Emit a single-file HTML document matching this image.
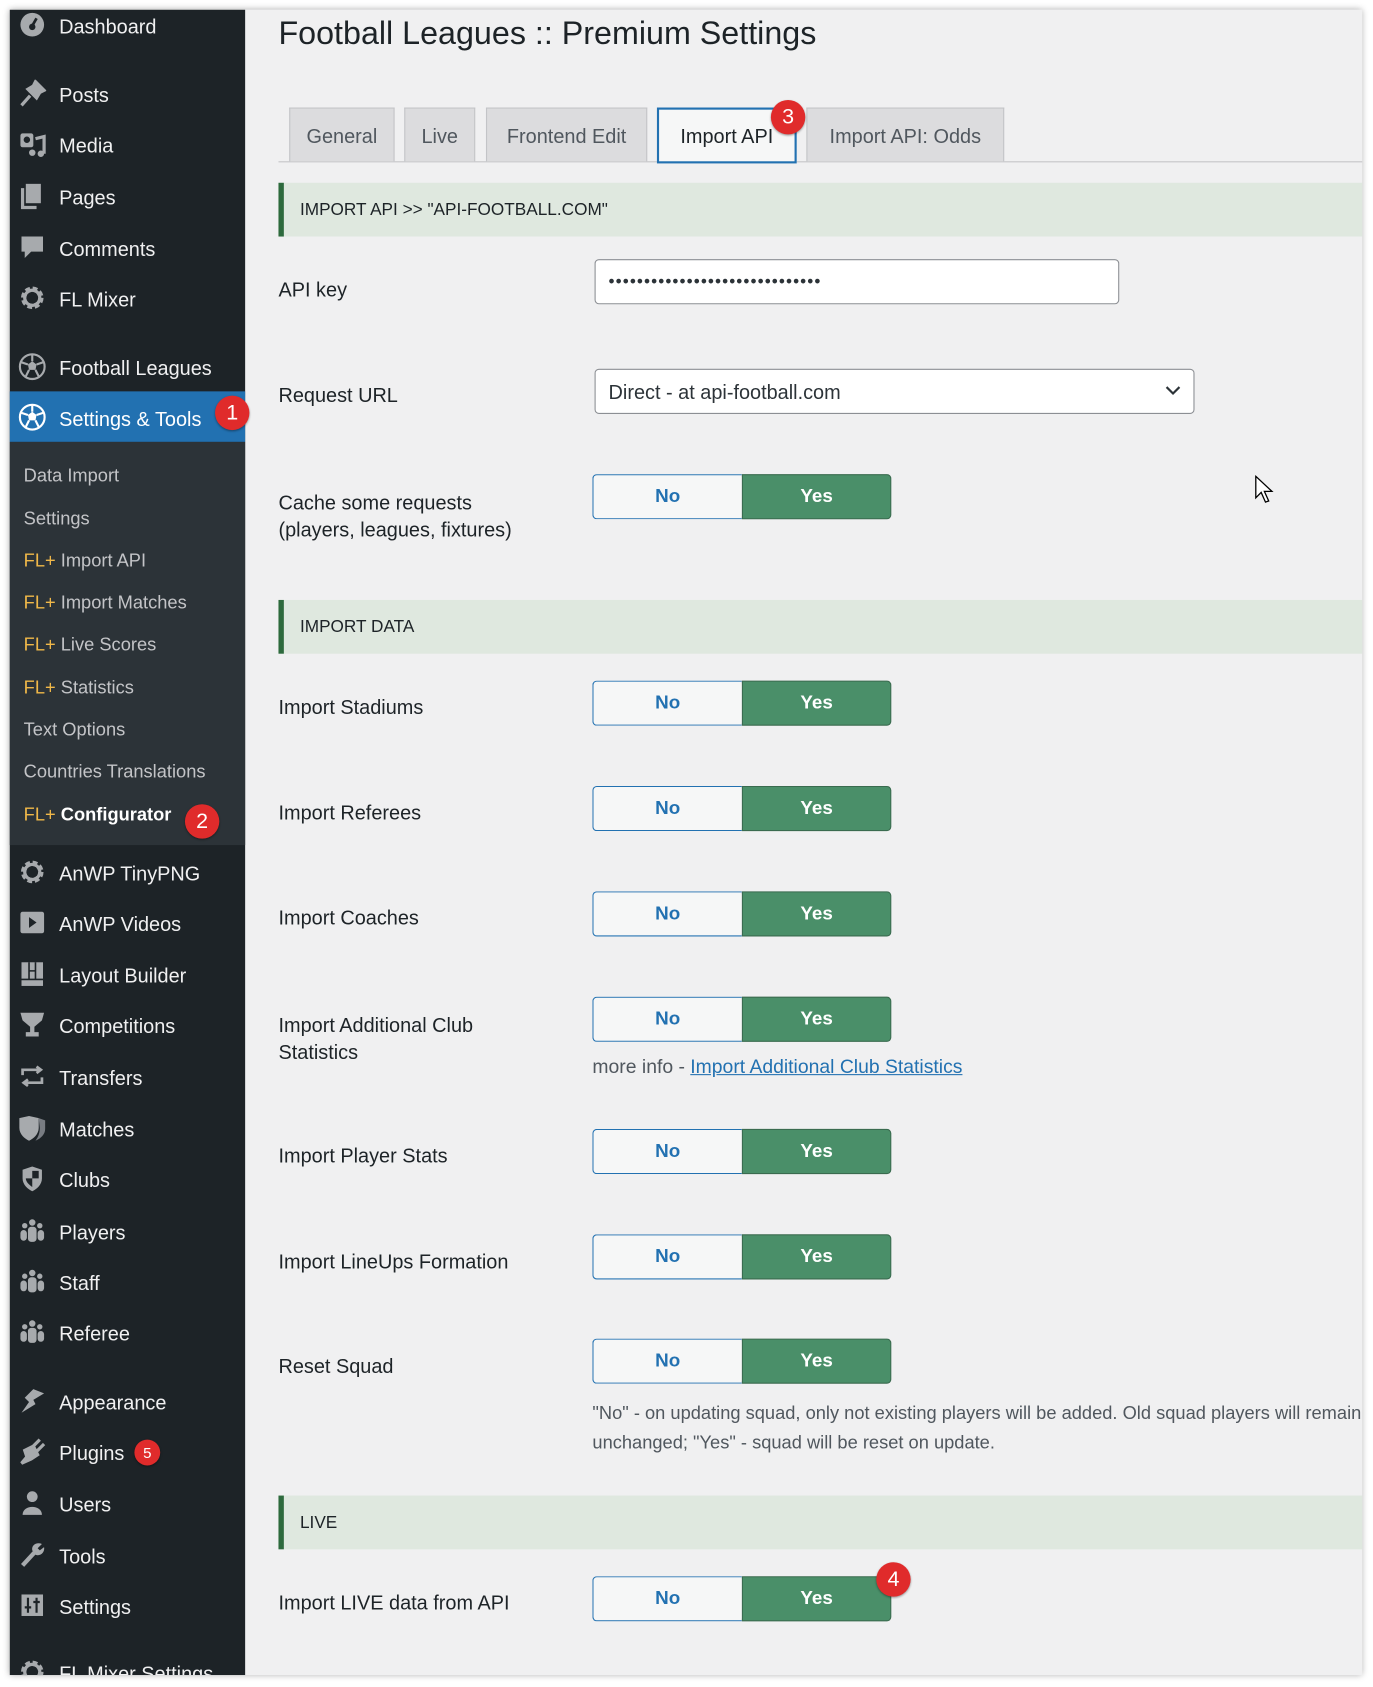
<!DOCTYPE html>
<html><head><meta charset="utf-8"><style>
*{margin:0;padding:0;box-sizing:border-box}
body{width:1373px;height:1687px;background:#fff;overflow:hidden;font-family:"Liberation Sans",sans-serif}
#w{position:absolute;left:0;top:0;width:1277px;height:1569px;transform:scale(1.07517);transform-origin:0 0}
#frame{position:absolute;left:9px;top:9px;width:1258px;height:1549px;background:#f0f0f1;overflow:hidden;box-shadow:0 0 6px rgba(0,0,0,.35)}
#side{position:absolute;left:0;top:0;width:219px;height:1549px;background:#1d2327}
.a{position:absolute;white-space:nowrap}
.m{color:#f0f0f1;font-size:18.5px;left:46px;margin-top:2px}
.ic{position:absolute;left:8px;width:26px;height:26px}
.s{color:#c3c4c7;font-size:17px;left:13px;margin-top:2px}
.fl{color:#f0b849}
.badge{position:absolute;width:32px;height:32px;border-radius:50%;background:#e02b2b;color:#fff;font-size:20px;text-align:center;line-height:32px;box-shadow:0 1px 2px rgba(0,0,0,.4)}
.lbl{color:#1d2327;font-size:18.5px;left:250px;margin-top:2px}
.tab{position:absolute;top:91px;height:50px;background:#dcdcde;border:1px solid #c3c4c7;border-bottom:none;color:#50575e;font-size:18.5px;line-height:52px;text-align:center}
.hd{position:absolute;left:250px;width:1010px;height:50px;background:#dfe8df;border-left:5px solid #2d6a3d;color:#1d2327;font-size:16px;line-height:52px;padding-left:15px}
.tg{position:absolute;left:542px;width:278px;height:42px}
.tg .n{position:absolute;left:0;top:0;width:139px;height:42px;background:#f6f7f7;border:1.5px solid #2271b1;border-right:none;border-radius:4px 0 0 4px;color:#2271b1;font-size:17.5px;text-align:center;line-height:39px;font-weight:bold}
.tg .y{position:absolute;left:139px;top:0;width:139px;height:42px;background:#4a8f69;border:1.5px solid #3a6b4f;border-radius:0 4px 4px 0;color:#fff;font-size:17.5px;text-align:center;line-height:39px;font-weight:bold}
.note{color:#50575e;font-size:17px;left:542px}
svg{display:block}
</style></head><body><div id="w"><div id="frame">
<div id="side">
<div class="a" style="left:0;top:355px;width:219px;height:47px;background:#2271b1"></div>
<div class="a" style="left:0;top:402px;width:219px;height:375px;background:#2c3338"></div>
<svg class="ic" style="top:1px" viewBox="0 0 26 26"><circle cx="13" cy="13" r="11" fill="#a7aaad"/><path d="M13 14 L17 7" stroke="#1d2327" stroke-width="2.5"/><circle cx="13" cy="15" r="3" fill="#1d2327"/></svg>
<div class="a m" style="top:3px">Dashboard</div>
<svg class="ic" style="top:65px" viewBox="0 0 26 26"><path d="M3 24 L11 15 M9 9 L17 17 L20 12 L24 10 L16 2 L14 6 Z" fill="#a7aaad" stroke="#a7aaad" stroke-width="3"/></svg>
<div class="a m" style="top:67px">Posts</div>
<svg class="ic" style="top:112px" viewBox="0 0 26 26"><rect x="2" y="3" width="12" height="13" rx="2" fill="#a7aaad"/><circle cx="8" cy="9" r="3" fill="#1d2327"/><path d="M16 8 L24 6 L24 22" stroke="#a7aaad" stroke-width="3" fill="none"/><circle cx="13" cy="21" r="3" fill="#a7aaad"/><circle cx="21" cy="22" r="3" fill="#a7aaad"/></svg>
<div class="a m" style="top:114px">Media</div>
<svg class="ic" style="top:160px" viewBox="0 0 26 26"><rect x="7" y="2" width="14" height="18" fill="#a7aaad"/><path d="M4 6 V24 H17" stroke="#a7aaad" stroke-width="3" fill="none"/></svg>
<div class="a m" style="top:162px">Pages</div>
<svg class="ic" style="top:208px" viewBox="0 0 26 26"><path d="M3 3 H23 V17 H12 L6 23 V17 H3 Z" fill="#a7aaad"/></svg>
<div class="a m" style="top:210px">Comments</div>
<svg class="ic" style="top:255px" viewBox="0 0 26 26"><circle cx="13" cy="13" r="8" fill="none" stroke="#a7aaad" stroke-width="5" stroke-dasharray="4 2.3"/><circle cx="13" cy="13" r="7" fill="none" stroke="#a7aaad" stroke-width="3"/></svg>
<div class="a m" style="top:257px">FL Mixer</div>
<svg class="ic" style="top:319px" viewBox="0 0 26 26"><circle cx="13" cy="13" r="11.5" fill="none" stroke="#a7aaad" stroke-width="2"/><path d="M13 8 L17 11 L16 16 L10 16 L9 11 Z" fill="#a7aaad"/><path d="M13 2 V8 M17 11 L23 9 M16 16 L19 22 M10 16 L7 22 M9 11 L3 9" stroke="#a7aaad" stroke-width="2"/></svg>
<div class="a m" style="top:321px">Football Leagues</div>
<svg class="ic" style="top:366px" viewBox="0 0 26 26"><circle cx="13" cy="13" r="11.5" fill="none" stroke="#fff" stroke-width="2"/><path d="M13 8 L17 11 L16 16 L10 16 L9 11 Z" fill="#fff"/><path d="M13 2 V8 M17 11 L23 9 M16 16 L19 22 M10 16 L7 22 M9 11 L3 9" stroke="#fff" stroke-width="2"/></svg>
<div class="a m" style="top:368px;color:#fff">Settings &amp; Tools</div>
<div class="badge" style="left:191px;top:359px">1</div>
<div class="a s" style="top:422px">Data Import</div>
<div class="a s" style="top:462px">Settings</div>
<div class="a s" style="top:501px"><span class="fl">FL+</span> Import API</div>
<div class="a s" style="top:540px"><span class="fl">FL+</span> Import Matches</div>
<div class="a s" style="top:579px"><span class="fl">FL+</span> Live Scores</div>
<div class="a s" style="top:619px"><span class="fl">FL+</span> Statistics</div>
<div class="a s" style="top:658px">Text Options</div>
<div class="a s" style="top:697px">Countries Translations</div>
<div class="a s" style="top:737px;color:#fff;font-weight:bold"><span class="fl" style="font-weight:normal">FL+</span> Configurator</div>
<div class="badge" style="left:163px;top:739px">2</div>
<svg class="ic" style="top:789px" viewBox="0 0 26 26"><circle cx="13" cy="13" r="8" fill="none" stroke="#a7aaad" stroke-width="5" stroke-dasharray="4 2.3"/><circle cx="13" cy="13" r="7" fill="none" stroke="#a7aaad" stroke-width="3"/></svg>
<div class="a m" style="top:791px">AnWP TinyPNG</div>
<svg class="ic" style="top:836px" viewBox="0 0 26 26"><rect x="2" y="3" width="22" height="20" rx="2" fill="#a7aaad"/><path d="M10 8 L17 13 L10 18 Z" fill="#1d2327"/></svg>
<div class="a m" style="top:838px">AnWP Videos</div>
<svg class="ic" style="top:884px" viewBox="0 0 26 26"><rect x="3" y="2" width="20" height="22" fill="#a7aaad"/><path d="M10 2 V18 M16 2 V18 M3 18 H23 M10 10 H16" stroke="#1d2327" stroke-width="1.5"/></svg>
<div class="a m" style="top:886px">Layout Builder</div>
<svg class="ic" style="top:931px" viewBox="0 0 26 26"><path d="M2 2 H24 L22 9 L15 15 V20 H19 V24 H7 V20 H11 V15 L4 9 Z" fill="#a7aaad"/></svg>
<div class="a m" style="top:933px">Competitions</div>
<svg class="ic" style="top:979px" viewBox="0 0 26 26"><path d="M4 12 V7 H20 M17 4 L21 7 L17 10 M22 14 V19 H6 M9 16 L5 19 L9 22" stroke="#a7aaad" stroke-width="2.5" fill="none"/></svg>
<div class="a m" style="top:981px">Transfers</div>
<svg class="ic" style="top:1027px" viewBox="0 0 26 26"><path d="M1 4 L10 2 L19 4 V13 C19 19 14 23 10 25 C6 23 1 19 1 13 Z" fill="#a7aaad"/><path d="M19 4 L25 6 V14 C25 19 21 23 16 25 C19 21 20 17 20 13 Z" fill="#787c82"/></svg>
<div class="a m" style="top:1029px">Matches</div>
<svg class="ic" style="top:1074px" viewBox="0 0 26 26"><path d="M4 5 L13 2 L22 5 V13 C22 19 17 23 13 25 C9 23 4 19 4 13 Z" fill="#a7aaad"/><path d="M13 6 H19 V13 H13 V21 C10 19 7 16 7 13 H13 Z" fill="#1d2327"/></svg>
<div class="a m" style="top:1076px">Clubs</div>
<svg class="ic" style="top:1123px" viewBox="0 0 26 26"><circle cx="13" cy="5" r="3" fill="#a7aaad"/><circle cx="6" cy="8" r="2.5" fill="#a7aaad"/><circle cx="20" cy="8" r="2.5" fill="#a7aaad"/><rect x="9" y="9" width="8" height="14" rx="3" fill="#a7aaad"/><rect x="2" y="12" width="6" height="10" rx="3" fill="#a7aaad"/><rect x="18" y="12" width="6" height="10" rx="3" fill="#a7aaad"/></svg>
<div class="a m" style="top:1125px">Players</div>
<svg class="ic" style="top:1170px" viewBox="0 0 26 26"><circle cx="13" cy="5" r="3" fill="#a7aaad"/><circle cx="6" cy="8" r="2.5" fill="#a7aaad"/><circle cx="20" cy="8" r="2.5" fill="#a7aaad"/><rect x="9" y="9" width="8" height="14" rx="3" fill="#a7aaad"/><rect x="2" y="12" width="6" height="10" rx="3" fill="#a7aaad"/><rect x="18" y="12" width="6" height="10" rx="3" fill="#a7aaad"/></svg>
<div class="a m" style="top:1172px">Staff</div>
<svg class="ic" style="top:1217px" viewBox="0 0 26 26"><circle cx="13" cy="5" r="3" fill="#a7aaad"/><circle cx="6" cy="8" r="2.5" fill="#a7aaad"/><circle cx="20" cy="8" r="2.5" fill="#a7aaad"/><rect x="9" y="9" width="8" height="14" rx="3" fill="#a7aaad"/><rect x="2" y="12" width="6" height="10" rx="3" fill="#a7aaad"/><rect x="18" y="12" width="6" height="10" rx="3" fill="#a7aaad"/></svg>
<div class="a m" style="top:1219px">Referee</div>
<svg class="ic" style="top:1281px" viewBox="0 0 26 26"><path d="M3 24 L10 14 L6 10 L14 2 L24 6 L14 12 L16 16 Z" fill="#a7aaad"/></svg>
<div class="a m" style="top:1283px">Appearance</div>
<svg class="ic" style="top:1328px" viewBox="0 0 26 26"><path d="M3 24 L8 18 L6 12 L14 8 L18 16 L12 20 Z M13 9 L20 2 M17 13 L24 6" stroke="#a7aaad" stroke-width="3" fill="#a7aaad"/></svg>
<div class="a m" style="top:1330px">Plugins</div>
<div class="badge" style="left:116px;top:1330px;width:24px;height:24px;line-height:24px;font-size:14px">5</div>
<svg class="ic" style="top:1376px" viewBox="0 0 26 26"><circle cx="13" cy="7" r="5" fill="#a7aaad"/><path d="M4 24 C4 14 22 14 22 24 Z" fill="#a7aaad"/></svg>
<div class="a m" style="top:1378px">Users</div>
<svg class="ic" style="top:1424px" viewBox="0 0 26 26"><path d="M4 23 L15 11" stroke="#a7aaad" stroke-width="4"/><path d="M13 9 C12 4 17 1 22 3 L18 7 L20 9 L24 6 C25 11 20 15 16 13 Z" fill="#a7aaad"/></svg>
<div class="a m" style="top:1426px">Tools</div>
<svg class="ic" style="top:1471px" viewBox="0 0 26 26"><rect x="3" y="3" width="20" height="20" fill="#a7aaad"/><path d="M9 6 V20 M17 6 V20 M6 15 H12 M14 10 H20" stroke="#1d2327" stroke-width="2"/></svg>
<div class="a m" style="top:1473px">Settings</div>
<svg class="ic" style="top:1533px" viewBox="0 0 26 26"><circle cx="13" cy="13" r="8" fill="none" stroke="#a7aaad" stroke-width="5" stroke-dasharray="4 2.3"/><circle cx="13" cy="13" r="7" fill="none" stroke="#a7aaad" stroke-width="3"/></svg>
<div class="a m" style="top:1535px">FL Mixer Settings</div>
</div>

<div class="a" style="left:250px;top:6px;font-size:30px;color:#1d2327">Football Leagues :: Premium Settings</div>
<div class="a" style="left:250px;top:141px;width:1010px;height:1px;background:#c3c4c7"></div>
<div class="tab" style="left:260px;width:98px">General</div>
<div class="tab" style="left:367px;width:66px">Live</div>
<div class="tab" style="left:443px;width:150px">Frontend Edit</div>
<div class="tab" style="left:602px;width:130px;background:#f6f7f7;border:2px solid #2271b1;color:#1d2327;height:52px;line-height:50px">Import API</div>
<div class="tab" style="left:741px;width:184px">Import API: Odds</div>
<div class="badge" style="left:708px;top:84px">3</div>

<div class="hd" style="top:161px">IMPORT API &gt;&gt; "API-FOOTBALL.COM"</div>
<div class="a lbl" style="top:248px">API key</div>
<div class="a" style="left:544px;top:232px;width:488px;height:42px;background:#fff;border:1px solid #8c8f94;border-radius:4px;padding-left:12px;line-height:42px;font-size:16px;letter-spacing:1px;color:#2c3338">••••••••••••••••••••••••••••••</div>
<div class="a lbl" style="top:346px">Request URL</div>
<div class="a" style="left:544px;top:334px;width:558px;height:42px;background:#fff;border:1px solid #8c8f94;border-radius:4px;padding-left:12px;line-height:42px;font-size:18.5px;color:#2c3338">Direct - at api-football.com</div>
<svg class="a" style="left:1074px;top:348px" width="16" height="12" viewBox="0 0 16 12"><path d="M2 3 L8 9 L14 3" stroke="#2c3338" stroke-width="2" fill="none"/></svg>
<div class="a lbl" style="top:444px;line-height:25px">Cache some requests<br>(players, leagues, fixtures)</div>
<div class="tg" style="top:432px"><div class="n">No</div><div class="y">Yes</div></div>
<svg class="a" style="left:1158px;top:433px" width="20" height="28" viewBox="0 0 20 28"><path d="M1 1 V21 L6 16 L10 25 L13 24 L9 15 L16 15 Z" fill="#fff" stroke="#000" stroke-width="1.2"/></svg>

<div class="hd" style="top:549px">IMPORT DATA</div>
<div class="a lbl" style="top:636px">Import Stadiums</div>
<div class="tg" style="top:624px"><div class="n">No</div><div class="y">Yes</div></div>
<div class="a lbl" style="top:734px">Import Referees</div>
<div class="tg" style="top:722px"><div class="n">No</div><div class="y">Yes</div></div>
<div class="a lbl" style="top:832px">Import Coaches</div>
<div class="tg" style="top:820px"><div class="n">No</div><div class="y">Yes</div></div>
<div class="a lbl" style="top:930px;line-height:25px">Import Additional Club<br>Statistics</div>
<div class="tg" style="top:918px"><div class="n">No</div><div class="y">Yes</div></div>
<div class="a note" style="top:973px;font-size:18px">more info - <span style="color:#2271b1;text-decoration:underline">Import Additional Club Statistics</span></div>
<div class="a lbl" style="top:1053px">Import Player Stats</div>
<div class="tg" style="top:1041px"><div class="n">No</div><div class="y">Yes</div></div>
<div class="a lbl" style="top:1152px">Import LineUps Formation</div>
<div class="tg" style="top:1139px"><div class="n">No</div><div class="y">Yes</div></div>
<div class="a lbl" style="top:1249px">Reset Squad</div>
<div class="tg" style="top:1236px"><div class="n">No</div><div class="y">Yes</div></div>
<div class="a note" style="top:1292px;line-height:27px">"No" - on updating squad, only not existing players will be added. Old squad players will remain<br>unchanged; "Yes" - squad will be reset on update.</div>

<div class="hd" style="top:1382px">LIVE</div>
<div class="a lbl" style="top:1469px">Import LIVE data from API</div>
<div class="tg" style="top:1457px"><div class="n">No</div><div class="y">Yes</div></div>
<div class="badge" style="left:806px;top:1444px">4</div>
</div></div></body></html>
